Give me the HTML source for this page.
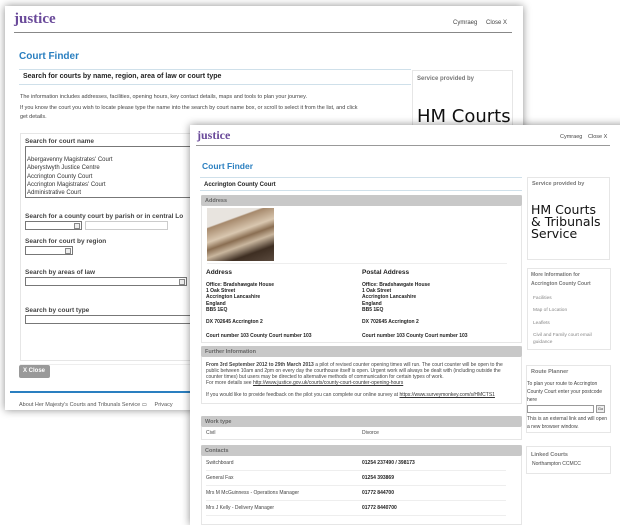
<!DOCTYPE html>
<html><head><meta charset="utf-8"><style>
*{margin:0;padding:0;box-sizing:border-box}
body{width:620px;height:516px;background:#fff;position:relative;overflow:hidden;font-family:"Liberation Sans",sans-serif;color:#333}
.a{position:absolute;white-space:nowrap}
.w{position:absolute;background:#fff;box-shadow:0 0 8px rgba(0,0,0,.45)}
.logo{font-family:"Liberation Serif",serif;color:#6a4a9a;font-weight:bold}
.cf{color:#2a7fc0;font-weight:bold}
.s{font-size:6px;color:#444}
.b{font-weight:bold;color:#222}
.hl{position:absolute;height:1px;background:#cfe0ea}
.bar{position:absolute;background:#c8c8c8;font-size:5.5px;color:#666;padding:3px 4px;border-radius:2px;font-weight:bold}
.box{position:absolute;border:1px solid #e6e6e6}
.sel{position:absolute;border:1px solid #777;height:9px;background:#fff}
.sel i{position:absolute;right:1px;top:1px;width:6px;height:6px;border:1px solid #888;background:#eee}
.hm{font-family:"DejaVu Sans",sans-serif;color:#111;line-height:.95}
u{color:#333}
</style></head><body>

<!-- window 1 -->
<div class="w" style="left:5px;top:6px;width:518px;height:404px">
  <div class="a logo" style="left:9px;top:5px;font-size:15px">justice</div>
  <div class="a s" style="left:448px;top:14px">Cymraeg</div>
  <div class="a s" style="left:481px;top:14px">Close X</div>
  <div class="a" style="left:9px;top:26px;width:498px;height:1px;background:#888"></div>
  <div class="a cf" style="left:14px;top:45px;font-size:10px">Court Finder</div>
  <div class="hl" style="left:14px;top:63px;width:392px"></div>
  <div class="a b" style="left:18px;top:67px;font-size:7px">Search for courts by name, region, area of law or court type</div>
  <div class="hl" style="left:14px;top:78px;width:392px"></div>
  <div class="a s" style="left:15px;top:88px;font-size:5.5px">The information includes addresses, facilities, opening hours, key contact details, maps and tools to plan your journey.</div>
  <div class="a s" style="left:15px;top:99px;font-size:5.5px">If you know the court you wish to locate please type the name into the search by court name box, or scroll to select it from the list, and click</div>
  <div class="a s" style="left:15px;top:108px;font-size:5.5px">get details.</div>
  <div class="box" style="left:407px;top:64px;width:101px;height:70px"></div>
  <div class="a" style="left:412px;top:70px;font-size:6px;color:#777;font-weight:bold">Service provided by</div>
  <div class="a hm" style="left:412px;top:102px;font-size:18px">HM Courts<br>&amp; Tribunals</div>
  <div class="box" style="left:15px;top:127px;width:190px;height:228px"></div>
  <div class="a b" style="left:20px;top:132px;font-size:6.5px;color:#444">Search for court name</div>
  <div class="a" style="left:20px;top:140px;width:180px;height:52px;border:1px solid #777"></div>
  <div class="a s" style="left:22px;top:150px;line-height:8.3px;color:#333">Abergavenny Magistrates' Court<br>Aberystwyth Justice Centre<br>Accrington County Court<br>Accrington Magistrates' Court<br>Administrative Court</div>
  <div class="a b" style="left:20px;top:207px;font-size:6.5px;color:#444">Search for a county court by parish or in central Lo</div>
  <div class="sel" style="left:20px;top:215px;width:57px"><i></i></div>
  <div class="a" style="left:80px;top:215px;width:83px;height:9px;border:1px solid #ccc"></div>
  <div class="a b" style="left:20px;top:232px;font-size:6.5px;color:#444">Search for court by region</div>
  <div class="sel" style="left:20px;top:240px;width:48px"><i></i></div>
  <div class="a b" style="left:20px;top:263px;font-size:6.5px;color:#444">Search by areas of law</div>
  <div class="sel" style="left:20px;top:271px;width:162px"><i></i></div>
  <div class="a b" style="left:20px;top:301px;font-size:6.5px;color:#444">Search by court type</div>
  <div class="sel" style="left:20px;top:309px;width:170px"></div>
  <div class="a" style="left:15px;top:358px;width:170px;height:1px;background:#eee"></div>
  <div class="a" style="left:14px;top:359px;width:31px;height:13px;background:#999;border-radius:2px;color:#fff;font-size:6px;font-weight:bold;padding:3px 4px">X Close</div>
  <div class="a" style="left:5px;top:385px;width:185px;height:2px;background:#2a7fc0"></div>
  <div class="a s" style="left:14px;top:396px;font-size:5.5px;color:#555">About Her Majesty's Courts and Tribunals Service ▭ &nbsp; &nbsp; Privacy</div>
</div>

<!-- window 2 -->
<div class="w" style="left:190px;top:125px;width:440px;height:400px">
  <div class="a logo" style="left:7px;top:3px;font-size:12px">justice</div>
  <div class="a s" style="left:370px;top:9px;font-size:5.5px">Cymraeg</div>
  <div class="a s" style="left:398px;top:9px;font-size:5.5px">Close X</div>
  <div class="a" style="left:6px;top:20px;width:414px;height:1px;background:#999"></div>
  <div class="a cf" style="left:12px;top:36px;font-size:8.5px">Court Finder</div>
  <div class="hl" style="left:10px;top:52px;width:322px"></div>
  <div class="a b" style="left:14px;top:57px;font-size:6px">Accrington County Court</div>
  <div class="hl" style="left:10px;top:65px;width:322px"></div>

  <div class="box" style="left:11px;top:70px;width:321px;height:148px"></div>
  <div class="bar" style="left:11px;top:70px;width:321px;height:11px">Address</div>
  <div class="a" style="left:17px;top:83px;width:67px;height:53px;background:linear-gradient(160deg,#e8e4df 0%,#e8e4df 25%,#a6896c 27%,#d9c7b0 45%,#8a6e52 55%,#c9b69e 65%,#3e2e22 80%,#5a4a3e 100%)"></div>
  <div class="a" style="left:17px;top:138px;width:300px;height:1px;background:#eee"></div>
  <div class="a b" style="left:16px;top:144px;font-size:6.5px">Address</div>
  <div class="a b" style="left:172px;top:144px;font-size:6.5px">Postal Address</div>
  <div class="a b" style="left:16px;top:157px;font-size:5px;line-height:6.2px">Office: Bradshawgate House<br>1 Oak Street<br>Accrington Lancashire<br>England<br>BB5 1EQ</div>
  <div class="a b" style="left:172px;top:157px;font-size:5px;line-height:6.2px">Office: Bradshawgate House<br>1 Oak Street<br>Accrington Lancashire<br>England<br>BB5 1EQ</div>
  <div class="a b" style="left:16px;top:194px;font-size:5px">DX 702645 Accrington 2</div>
  <div class="a b" style="left:172px;top:194px;font-size:5px">DX 702645 Accrington 2</div>
  <div class="a b" style="left:16px;top:208px;font-size:5px">Court number 103 County Court number 103</div>
  <div class="a b" style="left:172px;top:208px;font-size:5px">Court number 103 County Court number 103</div>

  <div class="box" style="left:11px;top:221px;width:321px;height:58px"></div>
  <div class="bar" style="left:11px;top:221px;width:321px;height:11px">Further Information</div>
  <div class="a s" style="left:16px;top:237px;font-size:5px;line-height:6.1px;color:#444"><b>From 3rd September 2012 to 29th March 2013</b> a pilot of revised counter opening times will run. The court counter will be open to the<br>public between 10am and 2pm on every day the courthouse itself is open. Urgent work will always be dealt with (including outside the<br>counter times) but users may be directed to alternative methods of communication for certain types of work.<br>For more details see <u>http://www.justice.gov.uk/courts/county-court-counter-opening-hours</u></div>
  <div class="a s" style="left:16px;top:267px;font-size:5px;color:#444">If you would like to provide feedback on the pilot you can complete our online survey at <u>https://www.surveymonkey.com/s/HMCTS1</u></div>

  <div class="box" style="left:11px;top:291px;width:321px;height:24px"></div>
  <div class="bar" style="left:11px;top:291px;width:321px;height:11px">Work type</div>
  <div class="a s" style="left:16px;top:305px;font-size:5px">Civil</div>
  <div class="a s" style="left:172px;top:305px;font-size:5px">Divorce</div>

  <div class="box" style="left:11px;top:320px;width:321px;height:80px"></div>
  <div class="bar" style="left:11px;top:320px;width:321px;height:11px">Contacts</div>
  <div class="a s" style="left:16px;top:335px;font-size:5px">Switchboard</div>
  <div class="a b" style="left:172px;top:335px;font-size:5px">01254 237490 / 398173</div>
  <div class="a" style="left:16px;top:345px;width:300px;height:1px;background:#eee"></div>
  <div class="a s" style="left:16px;top:350px;font-size:5px">General Fax</div>
  <div class="a b" style="left:172px;top:350px;font-size:5px">01254 393869</div>
  <div class="a" style="left:16px;top:360px;width:300px;height:1px;background:#eee"></div>
  <div class="a s" style="left:16px;top:365px;font-size:5px">Mrs M McGuinness - Operations Manager</div>
  <div class="a b" style="left:172px;top:365px;font-size:5px">01772 844700</div>
  <div class="a" style="left:16px;top:375px;width:300px;height:1px;background:#eee"></div>
  <div class="a s" style="left:16px;top:380px;font-size:5px">Mrs J Kelly - Delivery Manager</div>
  <div class="a b" style="left:172px;top:380px;font-size:5px">01772 8440700</div>
  <div class="a" style="left:16px;top:390px;width:300px;height:1px;background:#eee"></div>

  <div class="box" style="left:337px;top:52px;width:83px;height:83px"></div>
  <div class="a" style="left:342px;top:56px;font-size:5.5px;color:#777;font-weight:bold">Service provided by</div>
  <div class="a hm" style="left:341px;top:79px;font-size:12.5px">HM Courts<br>&amp; Tribunals<br>Service</div>

  <div class="box" style="left:337px;top:143px;width:84px;height:82px"></div>
  <div class="a" style="left:341px;top:146px;font-size:5px;color:#777;font-weight:bold;line-height:9px">More Information for<br>Accrington County Court</div>
  <div class="a" style="left:343px;top:168px;font-size:4.8px;color:#888;line-height:12.4px">Facilities<br>Map of Location<br>Leaflets<br>Civil and Family court email</div>
  <div class="a" style="left:343px;top:215px;font-size:4.8px;color:#888">guidance</div>

  <div class="box" style="left:336px;top:240px;width:85px;height:68px"></div>
  <div class="a" style="left:341px;top:244px;font-size:5.5px;color:#777;font-weight:bold">Route Planner</div>
  <div class="a s" style="left:337px;top:255px;font-size:5px;line-height:8px">To plan your route to Accrington<br>County Court enter your postcode<br>here</div>
  <div class="a" style="left:337px;top:280px;width:67px;height:8px;border:1px solid #999"></div>
  <div class="a" style="left:406px;top:280px;width:9px;height:8px;border:1px solid #999;background:#eee;font-size:4px;text-align:center">Go</div>
  <div class="a s" style="left:337px;top:290px;font-size:5px;line-height:8px">This is an external link and will open<br>a new browser window.</div>

  <div class="box" style="left:336px;top:321px;width:85px;height:28px"></div>
  <div class="a" style="left:341px;top:327px;font-size:5.5px;color:#777;font-weight:bold">Linked Courts</div>
  <div class="a s" style="left:342px;top:336px;font-size:5px">Northampton CCMCC</div>
</div>
</body></html>
